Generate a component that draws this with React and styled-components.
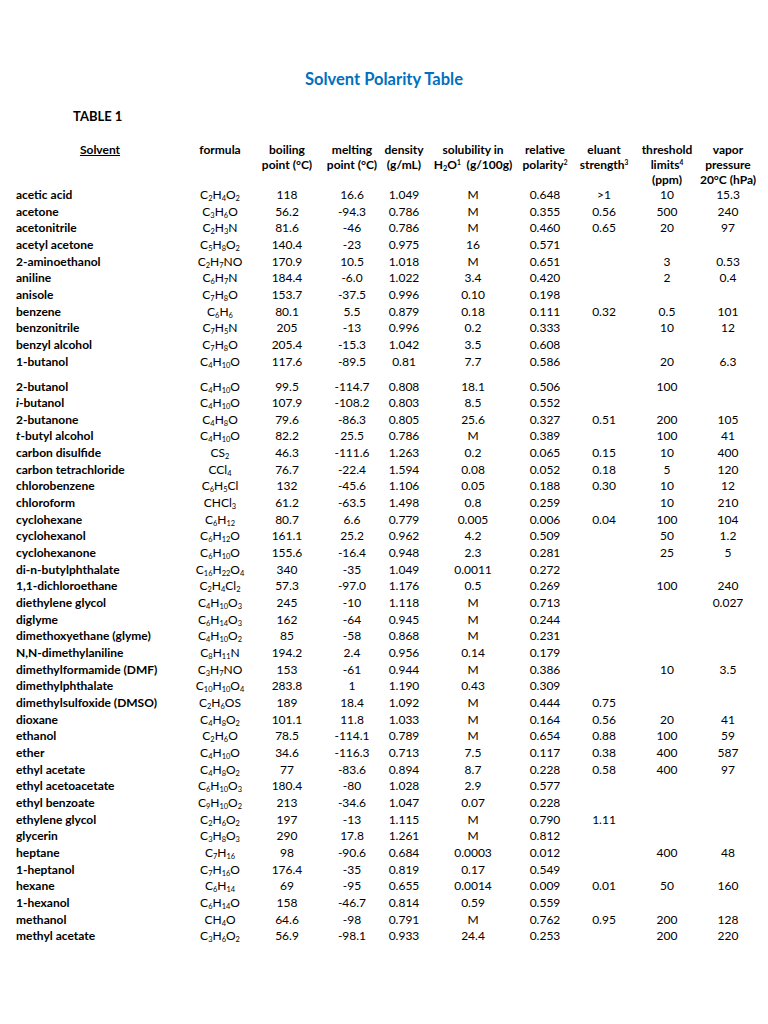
import React from "react";
import styled, { createGlobalStyle } from "styled-components";

const Global = createGlobalStyle`
  html, body { margin: 0; padding: 0; background: #fff; }
  body { font-family: Lato, "Open Sans", "Liberation Sans", sans-serif; color: #000; }
`;

const Page = styled.div`
  width: 768px;
  padding: 69px 0 40px 16px;
  box-sizing: border-box;
`;

const Title = styled.h1`
  margin: 0;
  padding-right: 16px;
  text-align: center;
  font-size: 16.5px;
  line-height: 20px;
  font-weight: 700;
  color: #0070c0;
`;

const TableLabel = styled.h2`
  margin: 17px 0 0 57px;
  font-size: 13px;
  line-height: 20px;
  font-weight: 700;
`;

const COLS = "174px 60px 74px 56px 48px 90px 54px 64px 62px 60px";

const HeaderRow = styled.div`
  display: grid;
  grid-template-columns: ${COLS};
  margin-top: 16px;
  font-size: 12px;
  line-height: 15px;
  font-weight: 700;
`;

const HeadCell = styled.div`
  display: flex;
  justify-content: center;
`;

const HeadText = styled.div`
  flex: none;
  text-align: center;
  white-space: nowrap;
  text-decoration: ${(p) => (p.$underline ? "underline" : "none")};
  margin-right: ${(p) => (p.$underline ? "6px" : "0")};
`;

const Body = styled.div`
  margin-top: 0;
`;

const Row = styled.div`
  display: grid;
  grid-template-columns: ${COLS};
  height: 16.67px;
  font-size: 12px;
  line-height: 16.67px;
`;

const Gap = styled.div`
  height: 8.3px;
`;

const NameCell = styled.div`
  font-weight: 700;
  white-space: nowrap;
`;

const Cell = styled.div`
  display: flex;
  justify-content: center;
  white-space: nowrap;
`;

const Sub = styled.sub`
  font-size: 0.62em;
  vertical-align: -0.3em;
  line-height: 0;
`;

const Sup = styled.sup`
  font-size: 0.55em;
  vertical-align: 0.6em;
  line-height: 0;
`;

const Formula = ({ f }) => {
  const parts = f.split(/(\d+)/).filter(Boolean);
  return (
    <span>
      {parts.map((p, i) => (/^\d+$/.test(p) ? <Sub key={i}>{p}</Sub> : <span key={i}>{p}</span>))}
    </span>
  );
};

const groupA = [
  ["acetic acid", "C2H4O2", "118", "16.6", "1.049", "M", "0.648", ">1", "10", "15.3"],
  ["acetone", "C3H6O", "56.2", "-94.3", "0.786", "M", "0.355", "0.56", "500", "240"],
  ["acetonitrile", "C2H3N", "81.6", "-46", "0.786", "M", "0.460", "0.65", "20", "97"],
  ["acetyl acetone", "C5H8O2", "140.4", "-23", "0.975", "16", "0.571"],
  ["2-aminoethanol", "C2H7NO", "170.9", "10.5", "1.018", "M", "0.651", "", "3", "0.53"],
  ["aniline", "C6H7N", "184.4", "-6.0", "1.022", "3.4", "0.420", "", "2", "0.4"],
  ["anisole", "C7H8O", "153.7", "-37.5", "0.996", "0.10", "0.198"],
  ["benzene", "C6H6", "80.1", "5.5", "0.879", "0.18", "0.111", "0.32", "0.5", "101"],
  ["benzonitrile", "C7H5N", "205", "-13", "0.996", "0.2", "0.333", "", "10", "12"],
  ["benzyl alcohol", "C7H8O", "205.4", "-15.3", "1.042", "3.5", "0.608"],
  ["1-butanol", "C4H10O", "117.6", "-89.5", "0.81", "7.7", "0.586", "", "20", "6.3"],
];

const groupB = [
  ["2-butanol", "C4H10O", "99.5", "-114.7", "0.808", "18.1", "0.506", "", "100"],
  ["i|-butanol", "C4H10O", "107.9", "-108.2", "0.803", "8.5", "0.552"],
  ["2-butanone", "C4H8O", "79.6", "-86.3", "0.805", "25.6", "0.327", "0.51", "200", "105"],
  ["t|-butyl alcohol", "C4H10O", "82.2", "25.5", "0.786", "M", "0.389", "", "100", "41"],
  ["carbon disulfide", "CS2", "46.3", "-111.6", "1.263", "0.2", "0.065", "0.15", "10", "400"],
  ["carbon tetrachloride", "CCl4", "76.7", "-22.4", "1.594", "0.08", "0.052", "0.18", "5", "120"],
  ["chlorobenzene", "C6H5Cl", "132", "-45.6", "1.106", "0.05", "0.188", "0.30", "10", "12"],
  ["chloroform", "CHCl3", "61.2", "-63.5", "1.498", "0.8", "0.259", "", "10", "210"],
  ["cyclohexane", "C6H12", "80.7", "6.6", "0.779", "0.005", "0.006", "0.04", "100", "104"],
  ["cyclohexanol", "C6H12O", "161.1", "25.2", "0.962", "4.2", "0.509", "", "50", "1.2"],
  ["cyclohexanone", "C6H10O", "155.6", "-16.4", "0.948", "2.3", "0.281", "", "25", "5"],
  ["di-n-butylphthalate", "C16H22O4", "340", "-35", "1.049", "0.0011", "0.272"],
  ["1,1-dichloroethane", "C2H4Cl2", "57.3", "-97.0", "1.176", "0.5", "0.269", "", "100", "240"],
  ["diethylene glycol", "C4H10O3", "245", "-10", "1.118", "M", "0.713", "", "", "0.027"],
  ["diglyme", "C6H14O3", "162", "-64", "0.945", "M", "0.244"],
  ["dimethoxyethane (glyme)", "C4H10O2", "85", "-58", "0.868", "M", "0.231"],
  ["N,N-dimethylaniline", "C8H11N", "194.2", "2.4", "0.956", "0.14", "0.179"],
  ["dimethylformamide (DMF)", "C3H7NO", "153", "-61", "0.944", "M", "0.386", "", "10", "3.5"],
  ["dimethylphthalate", "C10H10O4", "283.8", "1", "1.190", "0.43", "0.309"],
  ["dimethylsulfoxide (DMSO)", "C2H6OS", "189", "18.4", "1.092", "M", "0.444", "0.75"],
  ["dioxane", "C4H8O2", "101.1", "11.8", "1.033", "M", "0.164", "0.56", "20", "41"],
  ["ethanol", "C2H6O", "78.5", "-114.1", "0.789", "M", "0.654", "0.88", "100", "59"],
  ["ether", "C4H10O", "34.6", "-116.3", "0.713", "7.5", "0.117", "0.38", "400", "587"],
  ["ethyl acetate", "C4H8O2", "77", "-83.6", "0.894", "8.7", "0.228", "0.58", "400", "97"],
  ["ethyl acetoacetate", "C6H10O3", "180.4", "-80", "1.028", "2.9", "0.577"],
  ["ethyl benzoate", "C9H10O2", "213", "-34.6", "1.047", "0.07", "0.228"],
  ["ethylene glycol", "C2H6O2", "197", "-13", "1.115", "M", "0.790", "1.11"],
  ["glycerin", "C3H8O3", "290", "17.8", "1.261", "M", "0.812"],
  ["heptane", "C7H16", "98", "-90.6", "0.684", "0.0003", "0.012", "", "400", "48"],
  ["1-heptanol", "C7H16O", "176.4", "-35", "0.819", "0.17", "0.549"],
  ["hexane", "C6H14", "69", "-95", "0.655", "0.0014", "0.009", "0.01", "50", "160"],
  ["1-hexanol", "C6H14O", "158", "-46.7", "0.814", "0.59", "0.559"],
  ["methanol", "CH4O", "64.6", "-98", "0.791", "M", "0.762", "0.95", "200", "128"],
  ["methyl acetate", "C3H6O2", "56.9", "-98.1", "0.933", "24.4", "0.253", "", "200", "220"],
];

const Name = ({ n }) => {
  if (n.includes("|")) {
    const [it, rest] = n.split("|");
    return (
      <NameCell>
        <i>{it}</i>
        {rest}
      </NameCell>
    );
  }
  return <NameCell>{n}</NameCell>;
};

const DataRow = ({ r }) => (
  <Row>
    <Name n={r[0]} />
    <Cell>
      <Formula f={r[1]} />
    </Cell>
    {Array.from({ length: 8 }, (_, i) => (
      <Cell key={i}>{r[i + 2] || ""}</Cell>
    ))}
  </Row>
);

const Head = ({ children, underline }) => (
  <HeadCell>
    <HeadText $underline={underline}>{children}</HeadText>
  </HeadCell>
);

export default function App() {
  return (
    <Page>
      <Global />
      <Title>Solvent Polarity Table</Title>
      <TableLabel>TABLE 1</TableLabel>
      <HeaderRow>
        <Head underline>Solvent</Head>
        <Head>formula</Head>
        <Head>
          boiling
          <br />
          point (°C)
        </Head>
        <Head>
          melting
          <br />
          point (°C)
        </Head>
        <Head>
          density
          <br />
          (g/mL)
        </Head>
        <Head>
          solubility in
          <br />
          H<Sub>2</Sub>O<Sup>1</Sup>&nbsp; (g/100g)
        </Head>
        <Head>
          relative
          <br />
          polarity<Sup>2</Sup>
        </Head>
        <Head>
          eluant
          <br />
          strength<Sup>3</Sup>
        </Head>
        <Head>
          threshold
          <br />
          limits<Sup>4</Sup>
          <br />
          (ppm)
        </Head>
        <Head>
          vapor
          <br />
          pressure
          <br />
          20°C (hPa)
        </Head>
      </HeaderRow>
      <Body>
        {groupA.map((r) => (
          <DataRow key={r[0]} r={r} />
        ))}
        <Gap />
        {groupB.map((r) => (
          <DataRow key={r[0]} r={r} />
        ))}
      </Body>
    </Page>
  );
}
